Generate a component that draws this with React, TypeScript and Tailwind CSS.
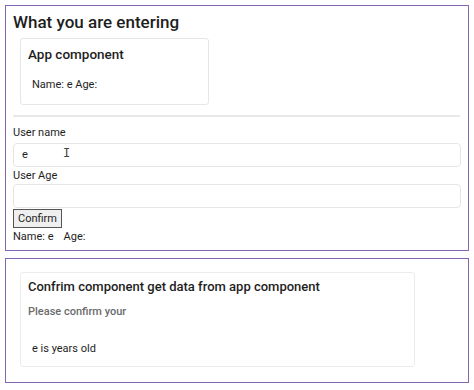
export default function App() {
  return (
    <div className="bg-white w-[474px] h-[390px] pt-[5px] px-[5px] font-['Roboto',sans-serif] text-[#1e1e1e]">
      <div className="border border-[#8466b0] h-[246px] px-[7px] pt-[7px] flex flex-col">
        <h1 className="text-[17px] font-medium leading-[18px]">What you are entering</h1>
        <div className="ml-[7px] mt-[7px] w-[189px] h-[67px] border border-[#e6e6e6] rounded-[3px] px-[7px] pt-[6px]">
          <h2 className="text-[13.5px] font-medium leading-[18px]">App component</h2>
          <p className="text-[11px] leading-[14px] mt-[15px] ml-[4px]">Name: e Age:</p>
        </div>
        <hr className="mt-[10px] border-t-2 border-[#e8e8e8] mr-[1px]" />
        <label className="text-[11px] leading-[14px] mt-[9px]">User name</label>
        <div className="relative mt-[1px]">
          <input
            readOnly
            value="e"
            className="w-full h-[24px] border border-[#e6e6e6] rounded-[4px] px-[8px] text-[11px] outline-none"
          />
          <span className="absolute left-[50px] top-[6px] text-[12px] leading-[12px] text-[#444] font-['DejaVu_Sans_Mono',monospace]">I</span>
        </div>
        <label className="text-[11px] leading-[14px] mt-[2px]">User Age</label>
        <input
          readOnly
          value=""
          className="mt-[1px] w-full h-[24px] border border-[#e6e6e6] rounded-[4px] px-[8px] text-[11px] outline-none"
        />
        <button className="self-start mt-[1px] h-[19px] px-[4px] border border-[#555] bg-[#efefef] text-[11px] leading-[15px]">
          Confirm
        </button>
        <p className="text-[11px] leading-[14px] mt-[2px]">
          Name: e<span className="ml-[10px]">Age:</span>
        </p>
      </div>
      <div className="mt-[7px] border border-[#8466b0] h-[125px] pl-[14px] pt-[13px]">
        <div className="w-[395px] h-[95px] border border-[#ececec] rounded-[3px] px-[7px] pt-[5px]">
          <h2 className="text-[13px] font-medium leading-[18px]">Confrim component get data from app component</h2>
          <p className="text-[11px] leading-[14px] mt-[9px] text-[#6b6b6b] font-medium">Please confirm your</p>
          <p className="text-[11px] leading-[14px] mt-[23px] ml-[4px]">e is years old</p>
        </div>
      </div>
    </div>
  );
}
